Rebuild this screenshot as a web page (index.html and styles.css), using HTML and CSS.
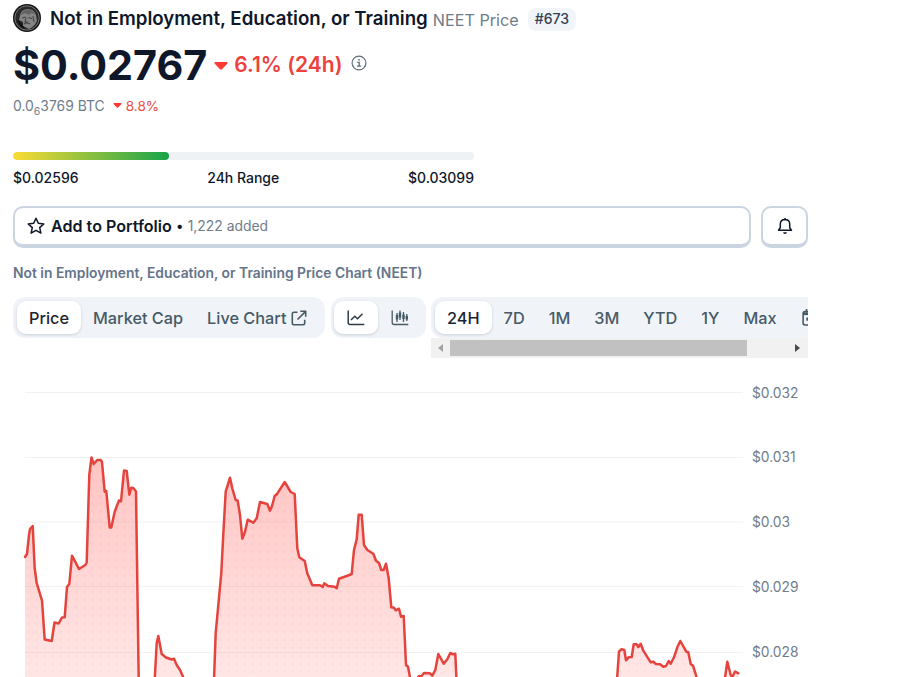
FILE: index.html
```
<!DOCTYPE html>
<html lang="en">
<head>
    <meta charset="UTF-8">
    <meta name="viewport" content="width=device-width, initial-scale=1.0">
    <title>NEET Price</title>
    <link rel="stylesheet" href="styles.css">
</head>
<body>

<main class="coin">
    <div class="coin-header">
        <svg class="coin-logo" viewBox="0 0 28 28">
            <circle cx="14" cy="14" r="14" fill="#151515"/>
            <circle cx="14" cy="14" r="12.2" fill="#2a2a2a" stroke="#8b8b8b" stroke-width="0.8"/>
            <path d="M7 12 Q8 5 15 5 Q21 5 23 11 L24 17 Q21 23 16 25 L10 22 L10 18 L6 16 Z" fill="#858585"/>
            <path d="M8 11 Q9 6 15 5.500 Q20 6 22 10 L18 9 L16 11 L12 9 Z" fill="#626262"/>
            <path d="M9 14 l4 -1 M15 13.500 l4 1 M13 14 l-1 4 l3 0 M11 20 q3 -2 6 0 M20 12 l1 6" fill="none" stroke="#444" stroke-width="1.100"/>
            <path d="M4 15 Q5 22 12 25 L9 20 Z" fill="#101010"/>
        </svg>
        <h1 class="coin-name">Not in Employment, Education, or Training</h1>
        <span class="coin-symbol">NEET Price</span>
        <span class="rank">#673</span>
    </div>

    <div class="price-row">
        <span class="price">$0.02767</span>
        <svg class="caret" viewBox="0 0 14 8"><path d="M1.500 0 H12.500 Q14.500 0.300 13 1.900 L8 7.300 Q7 8.200 6 7.300 L1 1.900 Q-0.500 0.300 1.500 0 Z"/></svg>
        <span class="change">6.1% (24h)</span>
        <svg class="info" viewBox="0 0 16 16" fill="none" stroke="#5f6d7a">
            <circle cx="8" cy="8" r="6.900" stroke-width="1.200"/>
            <path d="M6.300 7.300 H8.200 V11 M6 11.200 H10.200" stroke-width="1.300"/>
            <circle cx="8" cy="4.800" r="0.900" fill="#5f6d7a" stroke="none"/>
        </svg>
    </div>

    <div class="btc-row">
        <span class="btc">0.0<sub>6</sub>3769 BTC</span>
        <svg class="caret small" viewBox="0 0 14 8"><path d="M1.500 0 H12.500 Q14.500 0.300 13 1.900 L8 7.300 Q7 8.200 6 7.300 L1 1.900 Q-0.500 0.300 1.500 0 Z"/></svg>
        <span class="btc-change">8.8%</span>
    </div>

    <div class="range">
        <div class="range-bar"><div class="range-fill"></div></div>
        <div class="range-labels">
            <span class="range-low">$0.02596</span>
            <span class="range-title">24h Range</span>
            <span class="range-high">$0.03099</span>
        </div>
    </div>

    <div class="actions">
        <button class="btn portfolio">
            <svg class="star" viewBox="0 0 18 18" fill="none" stroke="#0f172a" stroke-width="1.500" stroke-linejoin="round"><path d="M9 1.300 L11.300 6.300 L16.800 6.900 L12.700 10.600 L13.900 16.100 L9 13.300 L4.100 16.100 L5.300 10.600 L1.200 6.900 L6.700 6.300 Z"/></svg>
            <span class="portfolio-text">Add to Portfolio</span>
            <span class="bullet">•</span>
            <span class="added">1,222 added</span>
        </button>
        <button class="btn alert">
            <svg class="bell" viewBox="0 0 16 18" fill="none" stroke="#0f172a" stroke-width="1.500" stroke-linejoin="round"><path d="M8 1 V2.500 M1.500 13.200 H14.500 L12.700 10.800 V7 Q12.500 2.700 8 2.600 Q3.500 2.700 3.300 7 V10.800 Z"/><path d="M6 15.200 H10 Q9.600 17 8 17 Q6.400 17 6 15.200 Z" fill="#0f172a" stroke="none"/></svg>
        </button>
    </div>

    <h2 class="chart-title">Not in Employment, Education, or Training Price Chart (NEET)</h2>

    <div class="controls">
        <div class="tabs types">
            <span class="tab active">Price</span>
            <span class="tab">Market Cap</span>
            <span class="tab">Live Chart
                <svg class="external" viewBox="0 0 16 16" fill="none" stroke="#475a67" stroke-width="1.600" stroke-linejoin="round"><path d="M6.500 2.300 H3 Q1.300 2.300 1.300 4 V13 Q1.300 14.700 3 14.700 H12 Q13.700 14.700 13.700 13 V9.800 M9.300 1.300 H14.700 V6.700 M14.400 1.600 L6.500 9.500"/></svg>
            </span>
        </div>
        <div class="tabs styles">
            <span class="tab active"><svg class="chart-icon" viewBox="0 0 18 16" fill="none" stroke="#303b48" stroke-width="1.500"><path d="M1.200 0.500 V12.500 Q1.200 14.500 3.200 14.500 H17.300 M4 10 L7.800 6.200 L10.500 8.700 L15.500 3.700"/></svg></span>
            <span class="tab"><svg class="chart-icon" viewBox="0 0 18 16" fill="none" stroke="#475a67" stroke-width="1.300"><path d="M1.200 0.500 V12.500 Q1.200 14.500 3.200 14.500 H17.300 M6 3 V12 M9 0.500 V10 M12.500 2 V12 M15.800 4 V11"/><path d="M6 5 V9.500 M9 2.500 V7.500 M12.500 4.500 V9 M15.800 6 V9.500" stroke-width="2.400"/></svg></span>
        </div>
        <div class="scroller">
            <div class="tabs periods">
                <span class="tab active">24H</span>
                <span class="tab">7D</span>
                <span class="tab">1M</span>
                <span class="tab">3M</span>
                <span class="tab">YTD</span>
                <span class="tab">1Y</span>
                <span class="tab">Max</span>
                <span class="tab"><svg class="calendar" viewBox="0 0 14 16" fill="none" stroke="#475a67" stroke-width="1.500"><rect x="1" y="2.500" width="12" height="12.500" rx="1.800"/><path d="M1 4.500 H13" stroke-width="2.500"/><path d="M4.200 0 V3 M9.800 0 V3"/><rect x="4" y="8" width="3" height="3" fill="#475a67" stroke="none"/></svg></span>
            </div>
            <div class="scrollbar">
                <span class="arrow left"></span>
                <span class="thumb"></span>
                <span class="arrow right"></span>
            </div>
        </div>
    </div>

    <svg class="chart" viewBox="13 370 795 307">
        <defs>
            <linearGradient id="area" x1="0" y1="457" x2="0" y2="830" gradientUnits="userSpaceOnUse">
                <stop offset="0" stop-color="#ff3a33" stop-opacity="0.300"/>
                <stop offset="1" stop-color="#ff3a33" stop-opacity="0"/>
            </linearGradient>
            <pattern id="dots" x="25" y="540" width="8" height="8" patternUnits="userSpaceOnUse">
                <circle cx="4" cy="4" r="0.800" fill="#e8403a" fill-opacity="0.130"/>
            </pattern>
        </defs>
        <g class="grid">
            <path d="M25 392.500 H743 M25 457.500 H743 M25 522 H743 M25 586.500 H743 M25 652.500 H743"/>
        </g>
        <g id="series"></g>
        <g class="axis">
            <text x="752" y="398">$0.032</text>
            <text x="752" y="462">$0.031</text>
            <text x="752" y="527">$0.03</text>
            <text x="752" y="591.500">$0.029</text>
            <text x="752" y="657">$0.028</text>
        </g>
    </svg>
</main>

<script src="chart.js"></script>
</body>
</html>
```
FILE: styles.css
```
* {
    box-sizing: border-box;
}

body {
    font-family: 'Inter', sans-serif;
    margin: 0;
    height: 677px;
    overflow: hidden;
    background: #fff;
    color: #0f172a;
}

.coin {
    width: 795px;
    margin-left: 13px;
}

.coin-header {
    display: flex;
    align-items: center;
    height: 36px;
}

.coin-logo {
    width: 28px;
    height: 28px;
}

.coin-name {
    margin: 0 0 0 9px;
    font-size: 18.65px;
    font-weight: 600;
    white-space: nowrap;
}

.coin-symbol {
    margin: 3px 0 0 5px;
    font-size: 16.2px;
    color: #6f7c8b;
}

.rank {
    margin: 2px 0 0 9px;
    padding: 0 7px;
    height: 23px;
    line-height: 22px;
    border-radius: 8px;
    background: #f1f4f9;
    font-size: 14px;
    font-weight: 500;
    color: #334155;
}

.price-row {
    display: flex;
    align-items: center;
    height: 57px;
}

.price {
    font-size: 41.3px;
    font-weight: 700;
}

.caret {
    width: 14px;
    height: 8px;
    margin: 2px 6px 0 7px;
    fill: #ff3a33;
}

.change {
    font-size: 21px;
    font-weight: 600;
    color: #ed423d;
}

.info {
    width: 16px;
    height: 16px;
    margin: -3px 0 0 9px;
}

.btc-row {
    display: flex;
    align-items: center;
    height: 25px;
    font-size: 13.9px;
    color: #6f7c8b;
}

.btc sub {
    font-size: 10.5px;
    line-height: 0;
}

.caret.small {
    width: 9px;
    height: 5px;
    margin: 0 4px 0 8px;
}

.btc-change {
    font-size: 13.6px;
    color: #e8504b;
}

.range {
    width: 461px;
    margin-top: 34px;
}

.range-bar {
    height: 8px;
    border-radius: 4px;
    background: #eff2f5;
    overflow: hidden;
}

.range-fill {
    width: 156px;
    height: 8px;
    border-radius: 4px;
    background: linear-gradient(90deg, #fcdc35, #16a34a);
}

.range-labels {
    display: flex;
    justify-content: space-between;
    margin-top: 9px;
    height: 18px;
    line-height: 17px;
    font-size: 14px;
    font-weight: 500;
}

.actions {
    display: flex;
    gap: 10px;
    margin-top: 19px;
}

.btn {
    display: flex;
    align-items: center;
    height: 42px;
    padding: 0 0 1px 12px;
    border: 2px solid #cbd5e1;
    border-bottom-width: 4px;
    border-radius: 10px;
    background: #fff;
    font-family: inherit;
    color: #0f172a;
}

.portfolio {
    flex: 1;
}

.alert {
    width: 47px;
    padding: 0 0 1px;
    justify-content: center;
}

.star {
    width: 18px;
    height: 18px;
}

.portfolio-text {
    margin-left: 6px;
    font-size: 16.1px;
    font-weight: 600;
}

.bullet {
    margin: 0 4px;
    font-size: 14px;
}

.added {
    font-size: 13.9px;
    color: #6f7c8b;
}

.bell {
    width: 16px;
    height: 18px;
}

.chart-title {
    margin: 15px 0 0;
    height: 22px;
    line-height: 21px;
    font-size: 13.85px;
    font-weight: 600;
    color: #64748b;
}

.controls {
    display: flex;
    gap: 6px;
    margin-top: 12px;
    height: 61px;
}

.tabs {
    display: flex;
    height: 41px;
    padding: 4px;
    border-radius: 12px;
    background: #f0f4f9;
}

.types {
    width: 312px;
}

.styles {
    width: 95px;
    padding-left: 3px;
}

.tab {
    display: flex;
    align-items: center;
    flex: none;
    height: 33px;
    padding: 0 12px;
    border-radius: 9px;
    font-size: 16.3px;
    font-weight: 500;
    color: #475a67;
    white-space: nowrap;
}

.tab.active {
    background: #fff;
    color: #1c2533;
    box-shadow: 0 1px 3px rgba(15, 23, 42, 0.16);
}

.styles .tab {
    width: 44px;
    padding: 0;
    justify-content: center;
}

.external {
    width: 16px;
    height: 16px;
    margin-left: 5px;
}

.chart-icon {
    width: 18px;
    height: 16px;
}

.scroller {
    width: 377px;
    margin-left: -1px;
    overflow: hidden;
}

.periods {
    width: 410px;
}

.periods .tab:last-child {
    padding-left: 13px;
}

.calendar {
    width: 15px;
    height: 17px;
}

.scrollbar {
    display: flex;
    align-items: center;
    height: 20px;
    background: #f1f1f1;
}

.thumb {
    width: 297px;
    height: 16px;
    margin-left: 7px;
    background: #c1c1c1;
}

.arrow {
    border: 4px solid transparent;
}

.arrow.left {
    margin-left: 7px;
    border-left-width: 0;
    border-right: 5px solid #a3a3a3;
}

.arrow.right {
    margin-left: 48px;
    border-right-width: 0;
    border-left: 5px solid #4a4a4a;
}

.chart {
    display: block;
    width: 795px;
    height: 307px;
    margin-top: 12px;
}

.grid path {
    stroke: #f1f2f4;
    fill: none;
}

.line {
    fill: none;
    stroke: #e5433d;
    stroke-width: 2.5;
    stroke-linejoin: round;
    stroke-linecap: round;
}

.axis text {
    font-size: 13.8px;
    fill: #6f7c8b;
}
```
FILE: chart.js
```
// visible stretches of the 24h price line
const runs = [
    '25,557 27,554 29,535 30,529 32.7,526 34.7,568.5 36.7,583 42,600.7 44.7,639.5 51.7,641 54.5,622.5 58.7,623.5 62,617.5 64.7,617.3 67,587 69.3,584 72,555.7 79,569 85.3,565 86.7,562.5 89.3,475 91.5,457.5 93.7,464 97.3,460 100.7,460 102,462 104.7,491.7 106.3,491 109.7,527.5 111.3,527.5 114.7,511.7 119,500.5 121,501.3 124,470.5 126.7,471 129.3,494.7 131.3,487.7 133.3,488 136,491.5 138.7,680',
    '154.7,680 156.7,643 158.3,636 161.7,654 166,657.5 171.7,659.5 174,658.7 176.7,665 180,670 184.5,680',
    '214,680 215.7,633 221.3,573 223,540 225.7,491.7 230,477.7 232.3,488.3 235.7,500 237.7,500.7 240,515 242.3,538.7 245,531.7 247.7,519.7 253.3,522.7 256.7,518.3 260,502 267.3,504 270,510.7 272,506 274.7,496 277.3,493.7 284.7,482 290.7,492 294.7,494 297.3,548.3 299.3,557.3 304.7,561 307.3,573.3 312.3,585.3 320,585.3 322.7,587 324.3,583.3 328,586 334.7,586.7 336.7,588.3 339,578.7 346.7,576 351.7,574 354,550 356.7,539.3 358.7,514.7 361.7,514.7 364,545 367.3,550 373.3,553.7 376,560.7 379,563 381.3,570 383.7,570 386,563.7 388.7,578.3 391.3,607.3 394,607.7 395.7,610.3 399,608.7 401,616.7 403.7,616 406,665 408,666.7 410.5,680',
    '416,680 419,676 421,676.5 424,673 430,673.3 432.3,675.7 435.3,670 438.3,654 443.7,663.7 447.3,659.3 450.3,653 453,654.3 455.3,653.7 456.5,680',
    '617,680 619,651.7 621.3,649.3 624.3,650 626,660.3 628.7,657.3 631.7,657 633.7,644.3 636.7,644.3 638.3,647 640.7,643.7 643.3,650.7 650.7,662.3 653.3,661.7 656,664 660,664.3 663.3,666.7 666,666 668.7,661 670.7,663.7 674,657.3 677.3,647.3 680.3,641 686.3,651.7 688.3,652.3 690.7,664 693,665.7 697.5,680',
    '724.7,680 727.3,661.7 730.7,675 732.3,677 735,671.5 738.3,673.3'
];

let shapes = '';
runs.forEach(points => {
    const list = points.split(' ');
    const first = list[0].split(',')[0];
    const last = list[list.length - 1].split(',')[0];
    const area = `${first},680 ${points} ${last},680`;
    shapes += `<polygon points="${area}" fill="url(#area)"/>`;
    shapes += `<polygon points="${area}" fill="url(#dots)"/>`;
    shapes += `<polyline class="line" points="${points}"/>`;
});
document.getElementById('series').innerHTML = shapes;
```
